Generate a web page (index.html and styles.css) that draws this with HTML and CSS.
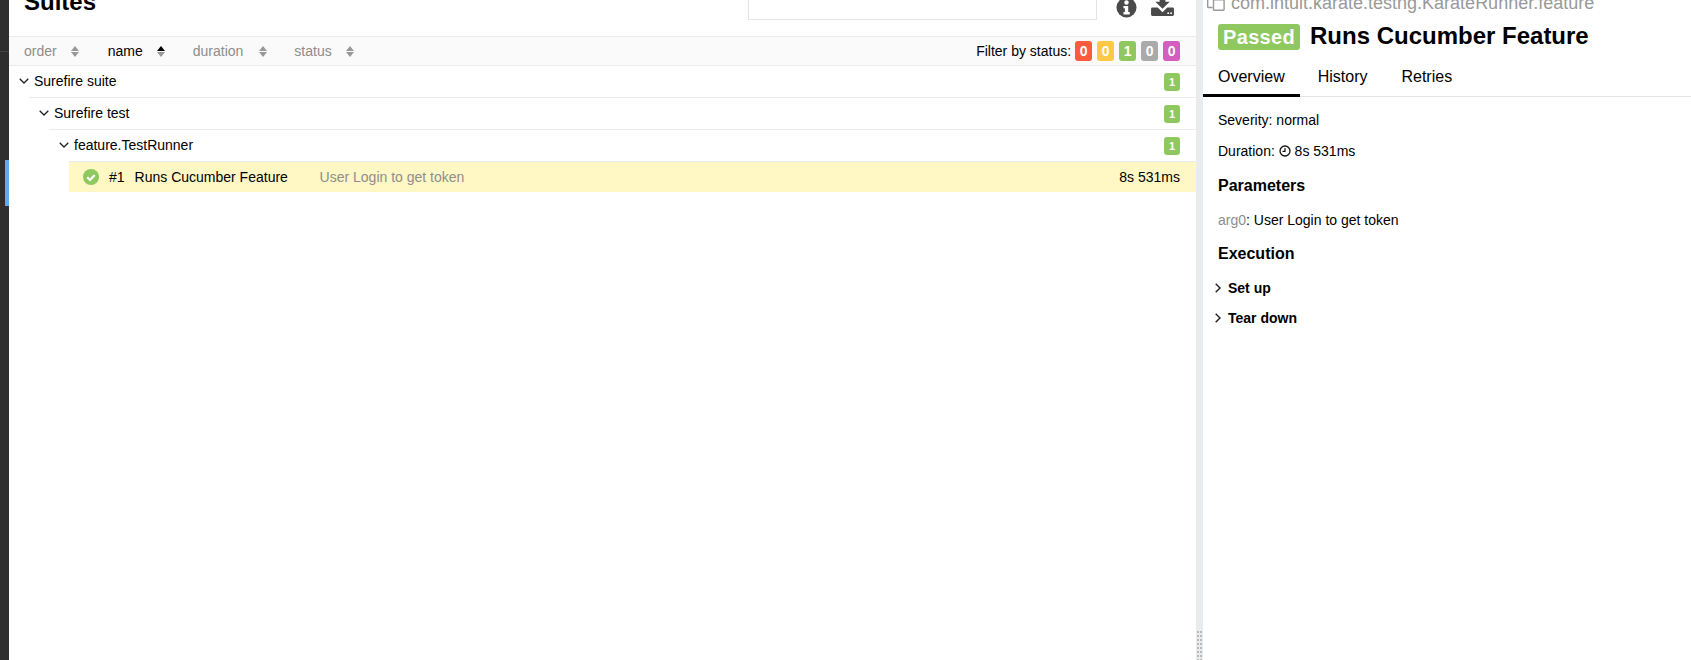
FILE: index.html
```html
<!DOCTYPE html>
<html lang="en">
<head>
  <meta charset="UTF-8">
  <title>Suites</title>
  <link rel="stylesheet" href="styles.css">
</head>
<body>

  <div id="sidenav">
    <div class="nav-line"></div>
    <div class="nav-active"></div>
  </div>

  <div id="suites">
    <div class="suites-head">
      <h2>Suites</h2>
      <div class="search"></div>
      <svg class="head-icon info" viewBox="0 0 22 22">
        <circle cx="11" cy="11" r="10.5" fill="#4a4a4a"/>
        <circle cx="11" cy="5.800" r="2.300" fill="#fff"/>
        <path d="M7.800 9.300h5v6.500h1.600v2.500H7.800v-2.500h1.500v-4H7.800z" fill="#fff"/>
      </svg>
      <svg class="head-icon download" viewBox="0 0 24 22">
        <path d="M9 0h6v7h4.500L12 14.500 4.500 7H9z" fill="#4a4a4a"/>
        <path d="M1.500 13H7l5 5 5-5h5.500a1.500 1.500 0 0 1 1.500 1.500v6a1.500 1.500 0 0 1-1.500 1.500h-21A1.500 1.500 0 0 1 0 20.500v-6A1.500 1.500 0 0 1 1.500 13z" fill="#4a4a4a"/>
        <circle cx="18" cy="19" r="1" fill="#fff"/>
        <circle cx="21" cy="19" r="1" fill="#fff"/>
      </svg>
    </div>

    <div class="sortbar">
      <div class="sorter sorter-order">order <span class="arrows"><i class="up"></i><i class="down"></i></span></div>
      <div class="sorter sorter-name on">name <span class="arrows"><i class="up"></i><i class="down"></i></span></div>
      <div class="sorter sorter-duration">duration <span class="arrows"><i class="up"></i><i class="down"></i></span></div>
      <div class="sorter">status <span class="arrows"><i class="up"></i><i class="down"></i></span></div>
      <div class="filter">
        Filter by status:
        <span class="count failed">0</span>
        <span class="count broken">0</span>
        <span class="count passed">1</span>
        <span class="count skipped">0</span>
        <span class="count unknown">0</span>
      </div>
    </div>

    <div class="tree">
      <div class="node level-0">
        <svg class="chev" viewBox="0 0 10 6"><path d="M.7.7 5 5 9.300.7" /></svg>
        <span class="node-name">Surefire suite</span>
        <span class="count small passed">1</span>
      </div>
      <div class="node level-1">
        <svg class="chev" viewBox="0 0 10 6"><path d="M.7.7 5 5 9.300.7" /></svg>
        <span class="node-name">Surefire test</span>
        <span class="count small passed">1</span>
      </div>
      <div class="node level-2">
        <svg class="chev" viewBox="0 0 10 6"><path d="M.7.7 5 5 9.300.7" /></svg>
        <span class="node-name">feature.TestRunner</span>
        <span class="count small passed">1</span>
      </div>
      <div class="leaf">
        <svg class="check" viewBox="0 0 16 16">
          <circle cx="8" cy="8" r="8" fill="#8ec85e"/>
          <path d="M4.200 8.200 7 11l4.800-5" fill="none" stroke="#fff" stroke-width="2.200"/>
        </svg>
        <span class="leaf-num">#1</span>
        <span class="leaf-name">Runs Cucumber Feature</span>
        <span class="leaf-param">User Login to get token</span>
        <span class="leaf-time">8s 531ms</span>
      </div>
    </div>
  </div>

  <div id="splitter">
    <div class="grip"></div>
  </div>

  <div id="details">
    <div class="path">
      <svg class="copy" viewBox="0 0 18 16">
        <path d="M5.500 12.500H1.500a.8.8 0 0 1-.8-.8V1.500M6.500 5.500a.8.8 0 0 1 .8-.8h9a.8.8 0 0 1 .8.8v9a.8.8 0 0 1-.8.8h-9a.8.8 0 0 1-.8-.8z" fill="none" stroke="#999" stroke-width="1.400"/>
      </svg>
      com.intuit.karate.testng.KarateRunner.feature
    </div>
    <div class="title">
      <span class="status-label">Passed</span>
      <h2>Runs Cucumber Feature</h2>
    </div>
    <div class="tabs">
      <div class="tab on">Overview</div>
      <div class="tab">History</div>
      <div class="tab">Retries</div>
    </div>
    <div class="pane">
      <p class="line">Severity: normal</p>
      <p class="line">Duration:
        <svg class="clock" viewBox="0 0 12 12">
          <circle cx="6" cy="6" r="5" fill="none" stroke="#111" stroke-width="1.300"/>
          <path d="M6 3v3.300H3.500" fill="none" stroke="#111" stroke-width="1.200"/>
        </svg>
        8s 531ms</p>
      <h3>Parameters</h3>
      <p class="line"><span class="muted">arg0</span>: User Login to get token</p>
      <h3 class="exec">Execution</h3>
      <div class="stage">
        <svg class="chev-right" viewBox="0 0 6 10"><path d="M.7.7 5 5 .7 9.300" /></svg>
        Set up
      </div>
      <div class="stage">
        <svg class="chev-right" viewBox="0 0 6 10"><path d="M.7.7 5 5 .7 9.300" /></svg>
        Tear down
      </div>
    </div>
  </div>

</body>
</html>
```

FILE: styles.css
```css
* {
  box-sizing: border-box;
}
html, body {
  height: 100%;
}
body {
  margin: 0;
  display: flex;
  height: 660px;
  overflow: hidden;
  font-family: "Liberation Sans", Arial, sans-serif;
  font-size: 14px;
  color: #000;
  background: #fff;
}
#sidenav {
  width: 9px;
  flex: none;
  background: #2e2e2e;
  padding-top: 51px;
}
.nav-line {
  height: 1px;
  background: #444;
}
.nav-active {
  width: 4px;
  height: 46px;
  margin: 108px 0 0 5px;
  background: #5eaaf5;
}

#suites {
  width: 1187px;
  flex: none;
}
.suites-head {
  height: 36px;
  display: flex;
  align-items: flex-start;
  overflow: hidden;
}
.suites-head h2 {
  margin: -12px 0 0 15px;
  font-size: 24px;
  line-height: 28px;
  flex: 1;
}
.search {
  width: 349px;
  height: 20px;
  border: 1px solid #e2e4e6;
  border-top: 0;
  margin-right: 19px;
}
.head-icon {
  flex: none;
  display: block;
}
.info {
  width: 21px;
  height: 21px;
  margin-top: -3px;
  margin-right: 14px;
}
.download {
  width: 23px;
  height: 21px;
  margin-top: -5px;
  margin-right: 22px;
}

.sortbar {
  height: 30px;
  display: flex;
  align-items: center;
  background: #fafafa;
  border-top: 1px solid #e9ecef;
  border-bottom: 1px solid #e9ecef;
  padding: 0 16px 0 15px;
}
.sorter {
  color: #8d8d8d;
  display: flex;
  align-items: center;
}
.sorter-order {
  margin-right: 28px;
}
.sorter-name {
  margin-right: 27px;
}
.sorter-duration {
  margin-right: 26px;
}
.sorter-duration .arrows {
  margin-left: 16px;
}
.sorter.on {
  color: #000;
}
.arrows {
  display: inline-block;
  margin-left: 14px;
  width: 9px;
}
.arrows i {
  display: block;
  width: 0;
  height: 0;
  border-left: 4.5px solid transparent;
  border-right: 4.5px solid transparent;
}
.arrows .up {
  border-bottom: 5px solid #999;
  margin-bottom: 1px;
}
.arrows .down {
  border-top: 5px solid #999;
}
.on .arrows .up {
  border-bottom-color: #000;
}
.filter {
  margin-left: auto;
  display: flex;
  align-items: center;
  gap: 5.2px;
}
.count {
  display: block;
  width: 16.8px;
  height: 20px;
  border-radius: 3px;
  color: #fff;
  font-weight: bold;
  font-size: 14px;
  line-height: 20px;
  text-align: center;
}
.filter .failed {
  margin-left: -1px;
}
.count.small {
  height: 18px;
  width: 16px;
  font-size: 11px;
  line-height: 18px;
}
.failed { background: #fd5a3e; }
.broken { background: #ffc846; }
.passed { background: #8ec85e; }
.skipped { background: #aaa; }
.unknown { background: #d35ebe; }

.node {
  height: 32px;
  display: flex;
  align-items: center;
  padding-right: 16px;
  padding-left: 10px;
  border-top: 1px solid #e9ecef;
}
.level-0 {
  height: 31px;
  border-top: 0;
}
.level-1 {
  margin-left: 20px;
}
.level-2 {
  margin-left: 40px;
}
.chev {
  width: 10px;
  height: 6px;
  margin: 0 5px 2px 0;
  fill: none;
  stroke: #222;
  stroke-width: 1.300;
}
.node-name {
  flex: 1;
  padding-bottom: 2px;
}
.leaf {
  height: 31px;
  margin-left: 60px;
  background: #fff7c4;
  border-top: 1px solid #e9ecef;
  display: flex;
  align-items: center;
  padding: 0 16px 0 14px;
}
.check {
  width: 16px;
  height: 16px;
  margin-right: 10px;
}
.leaf-num {
  margin-right: 10px;
}
.leaf-name {
  width: 185px;
}
.leaf-param {
  flex: 1;
  color: #8e8e8e;
}

#splitter {
  width: 7px;
  flex: none;
  background: #e9ecef;
  position: relative;
}
.grip {
  position: absolute;
  left: 1px;
  bottom: 0;
  width: 5px;
  height: 29px;
  background-image:
    linear-gradient(to right, transparent 2px, #e9ecef 2px),
    linear-gradient(to bottom, #b9b9b9 2px, transparent 2px);
  background-size: 3px 4px;
}

#details {
  flex: 1;
  min-width: 0;
  overflow: hidden;
}
.path {
  height: 18px;
  margin-top: -6px;
  padding-left: 4px;
  display: flex;
  align-items: center;
  gap: 6px;
  color: #999;
  font-size: 18px;
  line-height: 18px;
  white-space: nowrap;
}
.copy {
  width: 18px;
  height: 16px;
  flex: none;
}
.title {
  display: flex;
  align-items: center;
  margin-top: 12px;
  padding-left: 15px;
  height: 26px;
}
.status-label {
  width: 82px;
  height: 26px;
  border-radius: 3px;
  background: #8ec85e;
  color: #fff;
  font-size: 20px;
  font-weight: bold;
  letter-spacing: .3px;
  line-height: 26px;
  text-align: center;
  margin-right: 10px;
}
.title h2 {
  margin: -2px 0 0;
  font-size: 24px;
  font-weight: bold;
  line-height: 26px;
}
.tabs {
  display: flex;
  height: 47px;
  border-bottom: 1px solid #e2e4e6;
}
.tab {
  padding: 17px 15px 0;
  font-size: 16px;
  line-height: 20px;
  margin-bottom: -1px;
  margin-right: 4px;
}
.tab.on {
  border-bottom: 3px solid #000;
  margin-right: 3px;
}
.pane {
  padding: 15px 15px;
}
.line {
  margin: 0 0 14px;
  line-height: 17px;
}
.clock {
  width: 12px;
  height: 12px;
  vertical-align: -1px;
}
.muted {
  color: #8e8e8e;
}
.pane h3 {
  margin: 16px 0 16px;
  font-size: 16px;
  line-height: 20px;
}
.pane h3.exec {
  margin: 15px 0 9px;
}
.stage {
  display: flex;
  align-items: center;
  font-weight: bold;
  height: 30px;
  margin-left: -3px;
  gap: 7px;
}
.chev-right {
  width: 6px;
  height: 10px;
  fill: none;
  stroke: #222;
  stroke-width: 1.400;
}
```
